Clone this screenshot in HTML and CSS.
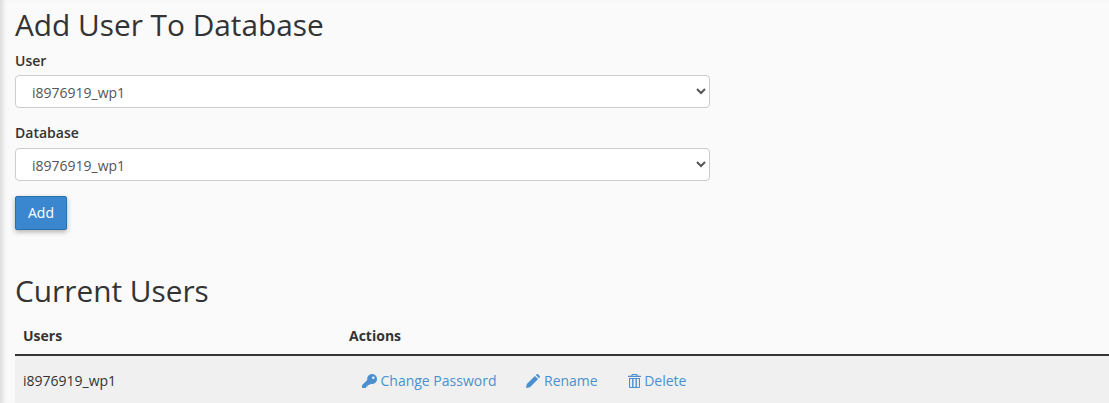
FILE: index.html
```html
<!DOCTYPE html>
<html lang="en">

<head>
    <meta charset="UTF-8">
    <title>MySQL Databases</title>
    <link rel="stylesheet" href="styles.css">
</head>

<body>
    <div class="content">
        <h2 class="title">Add User To Database</h2>
        <form class="add-form">
            <div class="form-group">
                <label for="user">User</label>
                <select id="user" class="form-control">
                    <option>i8976919_wp1</option>
                </select>
            </div>
            <div class="form-group">
                <label for="db">Database</label>
                <select id="db" class="form-control">
                    <option>i8976919_wp1</option>
                </select>
            </div>
            <button type="button" class="btn-primary">Add</button>
        </form>

        <h2 class="title users-title">Current Users</h2>
        <table class="users-table">
            <thead>
                <tr>
                    <th class="col-user">Users</th>
                    <th>Actions</th>
                </tr>
            </thead>
            <tbody>
                <tr>
                    <td>i8976919_wp1</td>
                    <td class="actions">
                        <a href="#">
                            <svg class="icon icon-key" viewBox="0 0 15 14"><path fill-rule="evenodd" d="M15 5c0 2.800-2.200 5-5 5-.5 0-1-.1-1.400-.2L7.300 11.100H5.700v1.500H4.100V14H.5a.5.5 0 0 1-.5-.5v-2.200c0-.2.100-.3.200-.4l5-5A5 5 0 0 1 10 0c2.800 0 5 2.200 5 5zm-3.700-2.600a1.300 1.300 0 1 0 0 2.600 1.300 1.300 0 0 0 0-2.600z"/></svg>
                            <span>Change Password</span>
                        </a>
                        <a href="#">
                            <svg class="icon icon-pencil" viewBox="0 0 14 14"><path d="M0 14l.8-4L8.900 1.900l3.200 3.200L4 13.200zM9.800 1 10.600.3c.4-.4 1-.4 1.400 0l1.700 1.700c.4.4.4 1 0 1.400L13 4.200z"/></svg>
                            <span>Rename</span>
                        </a>
                        <a href="#">
                            <svg class="icon icon-trash" viewBox="0 0 13 14"><path fill-rule="evenodd" d="M4 0h5l.9 1.700H13v1.200H0V1.700h3.100zM4.700 1l-.3.700h4.200L8.300 1zM1 4h11v8.700c0 .7-.6 1.300-1.300 1.300H2.300C1.600 14 1 13.400 1 12.700zM2.100 5v8h2V5zm3.400 0v8h2V5zm3.400 0v8h2V5z"/></svg>
                            <span>Delete</span>
                        </a>
                    </td>
                </tr>
            </tbody>
        </table>
    </div>
</body>

</html>
```

FILE: styles.css
```css
html, body {
    margin: 0;
    height: 100%;
    overflow: hidden;
}

body {
    background-color: #fafafa;
    font-family: "Open Sans", sans-serif;
    font-size: 14px;
    line-height: 20px;
    color: #333;
    box-shadow: inset 6px 0 5px -3px rgba(0, 0, 0, 0.12);
}

.content {
    padding: 0 0 0 15px;
}

.title {
    margin: 0;
    font-size: 29.8px;
    font-weight: 400;
    line-height: 33px;
    padding-top: 8px;
}

.add-form {
    margin-top: 9px;
    width: 695px;
}

.form-group {
    margin-bottom: 15px;
}

label {
    display: block;
    font-weight: 600;
    line-height: 22px;
    margin-bottom: 3px;
}

.form-group + .form-group label {
    margin-top: -1px;
    margin-bottom: 4px;
}

.form-control {
    display: block;
    width: 100%;
    height: 33px;
    padding: 6px 12px;
    font-family: inherit;
    font-size: 14px;
    color: #555;
    background-color: #fff;
    border: 1px solid #ccc;
    border-radius: 4px;
}

.btn-primary {
    display: block;
    width: 52px;
    height: 34px;
    padding: 0 0 2px;
    font-family: inherit;
    font-size: 14px;
    color: #fff;
    background-color: #3a87cf;
    border: 1px solid #2a6fae;
    border-radius: 2px;
    box-shadow: 0 2px 5px rgba(0, 0, 0, 0.3);
}

.users-title {
    margin-top: 36px;
}

.users-table {
    width: 1094px;
    margin-top: 11px;
    border-collapse: collapse;
}

.users-table th {
    text-align: left;
    font-weight: 700;
    padding: 8px;
    border-bottom: 2px solid #333;
}

.users-table td {
    padding: 15px 8px;
    background-color: #f0f0f0;
}

.col-user {
    width: 310px;
}

.actions {
    display: flex;
    gap: 30px;
    padding-left: 21px !important;
}

.actions a {
    display: inline-flex;
    align-items: center;
    gap: 3.5px;
    color: #4a90d0;
    text-decoration: none;
}

.icon {
    height: 14px;
    fill: #4a90d0;
}

.icon-key {
    width: 15px;
}

.icon-pencil {
    width: 14px;
}

.icon-trash {
    width: 13px;
}
```
